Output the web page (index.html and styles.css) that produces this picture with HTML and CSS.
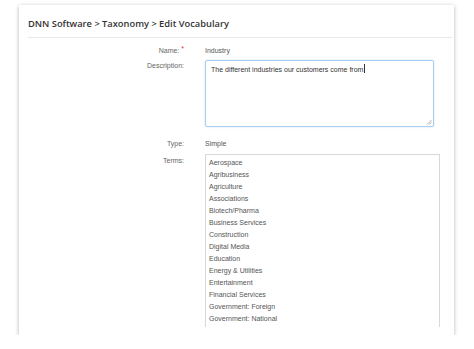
FILE: index.html
```
<!DOCTYPE html>
<html lang="en">
<head>
    <meta charset="UTF-8">
    <title>Edit Vocabulary - DNN Software</title>
    <link rel="stylesheet" href="styles.css">
</head>
<body>
    <div class="vocab-card">
        <h1 class="vocab-title">DNN Software &gt; Taxonomy &gt; Edit Vocabulary</h1>

        <div class="vocab-form">
            <div class="form-row row-name">
                <span class="form-label">Name: <span class="required">*</span></span>
                <span class="form-value">Industry</span>
            </div>

            <div class="form-row row-desc">
                <span class="form-label">Description:</span>
                <div class="desc-box">
                    <span>The different industries our customers come from</span><span class="caret"></span>
                    <svg class="grip" width="6" height="6" viewBox="0 0 6 6">
                        <path d="M5.5 1 L1 5.5 M5.5 3.2 L3.2 5.5" stroke="#999" stroke-width="0.8"/>
                    </svg>
                </div>
            </div>

            <div class="form-row row-type">
                <span class="form-label">Type:</span>
                <span class="form-value">Simple</span>
            </div>

            <div class="form-row row-terms">
                <span class="form-label">Terms:</span>
                <ul class="terms-list">
                    <li>Aerospace</li>
                    <li>Agribusiness</li>
                    <li>Agriculture</li>
                    <li>Associations</li>
                    <li>Biotech/Pharma</li>
                    <li>Business Services</li>
                    <li>Construction</li>
                    <li>Digital Media</li>
                    <li>Education</li>
                    <li>Energy &amp; Utilities</li>
                    <li>Entertainment</li>
                    <li>Financial Services</li>
                    <li>Government: Foreign</li>
                    <li>Government: National</li>
                </ul>
            </div>
        </div>
    </div>
</body>
</html>
```

FILE: styles.css
```
body {
    margin: 0;
    padding: 5px 20px 0 19px;
    background-color: #fff;
    font-family: "Liberation Sans", Arial, sans-serif;
    font-size: 7px;
    color: #555;
}

.vocab-card {
    height: 330px;
    overflow: hidden;
    background-color: #fff;
    box-shadow: 0 1px 4px rgba(0,0,0,0.3);
}

.vocab-title {
    margin: 0 2px 0 9px;
    height: 28px;
    padding-top: 4px;
    display: flex;
    align-items: center;
    border-bottom: 1px solid #e8e8e8;
    font-family: "Open Sans", sans-serif;
    font-size: 9.3px;
    font-weight: 600;
    color: #333;
}

.vocab-form {
    padding-top: 7px;
}

.form-row {
    display: grid;
    grid-template-columns: 165px 1fr;
    column-gap: 21px;
    line-height: 12px;
}

.form-label {
    text-align: right;
    color: #666;
}

.required {
    color: #d33;
    position: relative;
    top: -2px;
}

.row-desc {
    margin-top: 3px;
}

.row-desc .form-label {
    padding-top: 0;
}

.desc-box {
    position: relative;
    width: 217px;
    height: 59px;
    padding: 3px 5px;
    border: 1px solid #a9cdee;
    border-radius: 2px;
    box-shadow: 0 0 2px rgba(120,170,230,0.4);
    color: #333;
    line-height: 12px;
}

.caret {
    display: inline-block;
    width: 1px;
    height: 9px;
    margin-left: 1px;
    vertical-align: -1px;
    background-color: #333;
}

.grip {
    position: absolute;
    right: 1px;
    bottom: 1px;
}

.row-type {
    margin-top: 11px;
}

.row-terms {
    margin-top: 4px;
}

.row-terms .form-label {
    padding-top: 1px;
}

.terms-list {
    list-style: none;
    margin: 0;
    padding: 2px 0 0 3px;
    width: 230px;
    height: 170px;
    overflow: hidden;
    border: 1px solid #d8d8d8;
    border-bottom: none;
    color: #555;
}

.terms-list li {
    line-height: 12px;
}
```
